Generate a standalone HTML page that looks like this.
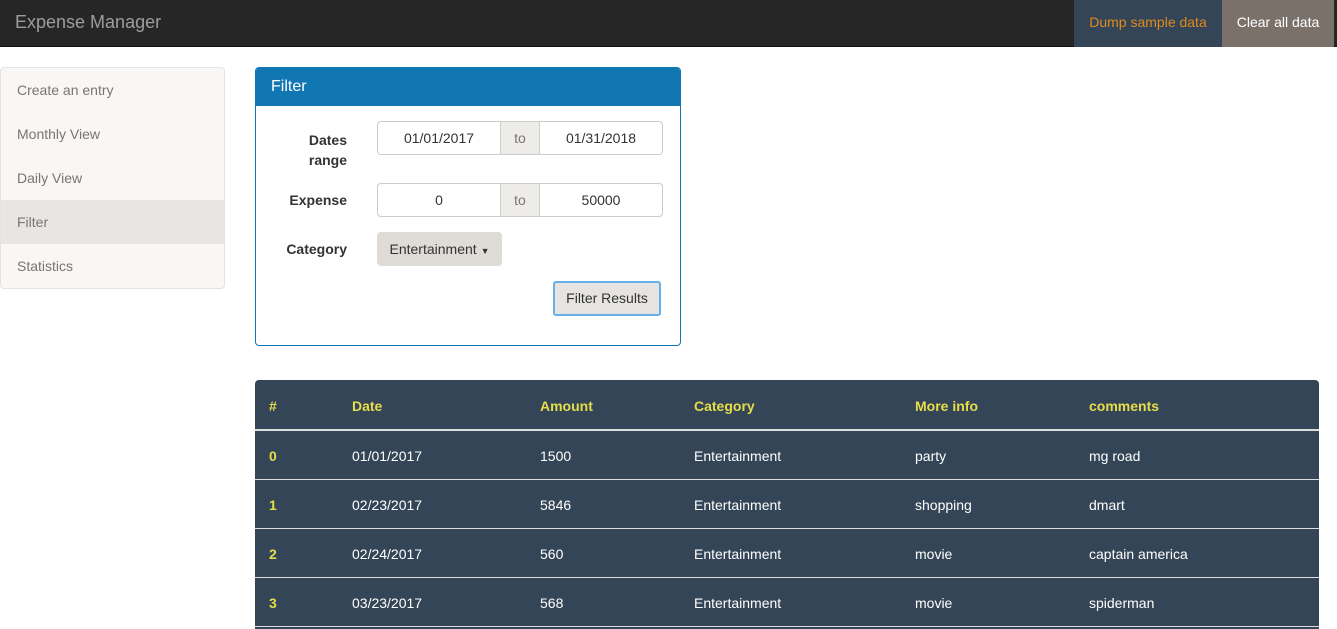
<!DOCTYPE html>
<html><head><meta charset="utf-8"><style>
*{box-sizing:border-box;margin:0;padding:0}
body{width:1337px;height:629px;overflow:hidden;background:#fff;font-family:"Liberation Sans",Arial,sans-serif;font-size:14px;color:#333;position:relative}
.a{position:absolute}
.nav{left:0;top:0;width:1337px;height:47px;background:#262626;border-bottom:1px solid #111}
.side{left:0;top:67px;width:225px;height:222px;border:1px solid #e5e3df;border-radius:4px;background:#f8f7f5}
.side div{height:44px;line-height:44px;padding-left:16px;color:#7a7571}
.inp{height:34px;border:1px solid #ccc;text-align:center;line-height:32px;background:#fff}
.lbl{font-weight:bold;text-align:right;width:92px;left:255px}
.t{color:#fff;position:absolute}
.y{color:#e6dd4a;font-weight:bold}
.line{position:absolute;left:255px;width:1064px;height:1px;background:#ddd}
</style></head><body>
<div class="a nav"></div>
<div class="a" style="left:15px;top:12px;font-size:18px;color:#9d9d9d">Expense Manager</div>
<div class="a" style="left:1074px;top:0;width:148px;height:47px;background:#334556;color:#e08a1e;line-height:44px;text-align:center">Dump sample data</div>
<div class="a" style="left:1222px;top:0;width:112px;height:47px;background:#7a716b;color:#fff;line-height:44px;text-align:center">Clear all data</div>
<div class="a side"><div>Create an entry</div><div>Monthly View</div><div>Daily View</div><div style="background:#e8e6e3">Filter</div><div>Statistics</div></div>
<div class="a" style="left:255px;top:67px;width:426px;height:279px;border:1px solid #1177b2;border-radius:4px;overflow:hidden">
<div style="background:#1177b2;height:38px;color:#fff;font-size:16px;line-height:38px;padding-left:15px">Filter</div></div>
<div class="a lbl" style="top:130px;line-height:20px">Dates<br>range</div>
<div class="a lbl" style="top:192px">Expense</div>
<div class="a lbl" style="top:241px">Category</div>
<div class="a inp" style="left:377px;top:121px;width:124px;border-radius:4px 0 0 4px">01/01/2017</div>
<div class="a inp" style="left:500px;top:121px;width:40px;background:#eeece9;color:#777">to</div>
<div class="a inp" style="left:539px;top:121px;width:124px;border-radius:0 4px 4px 0">01/31/2018</div>
<div class="a inp" style="left:377px;top:183px;width:124px;border-radius:4px 0 0 4px">0</div>
<div class="a inp" style="left:500px;top:183px;width:40px;background:#eeece9;color:#777">to</div>
<div class="a inp" style="left:539px;top:183px;width:124px;border-radius:0 4px 4px 0">50000</div>
<div class="a" style="left:377px;top:232px;width:125px;height:34px;background:#dfdcd8;border-radius:4px;line-height:34px;text-align:center">Entertainment <span style="font-size:9px">▼</span></div>
<div class="a" style="left:553px;top:281px;width:108px;height:35px;background:#e6e4e1;border:2px solid #66afe9;border-radius:3px;line-height:31px;text-align:center">Filter Results</div>
<div class="a" style="left:255px;top:380px;width:1064px;height:249px;background:#334556;border-radius:4px 4px 0 0"></div>
<div class="line" style="top:429px;height:2px"></div>
<div class="line" style="top:479px"></div><div class="line" style="top:528px"></div><div class="line" style="top:577px"></div><div class="line" style="top:626px"></div>
<div class="t y" style="left:269px;top:398px">#</div><div class="t y" style="left:352px;top:398px">Date</div><div class="t y" style="left:540px;top:398px">Amount</div><div class="t y" style="left:694px;top:398px">Category</div><div class="t y" style="left:915px;top:398px">More info</div><div class="t y" style="left:1089px;top:398px">comments</div>
<div class="t y" style="left:269px;top:448px">0</div><div class="t" style="left:352px;top:448px">01/01/2017</div><div class="t" style="left:540px;top:448px">1500</div><div class="t" style="left:694px;top:448px">Entertainment</div><div class="t" style="left:915px;top:448px">party</div><div class="t" style="left:1089px;top:448px">mg road</div>
<div class="t y" style="left:269px;top:497px">1</div><div class="t" style="left:352px;top:497px">02/23/2017</div><div class="t" style="left:540px;top:497px">5846</div><div class="t" style="left:694px;top:497px">Entertainment</div><div class="t" style="left:915px;top:497px">shopping</div><div class="t" style="left:1089px;top:497px">dmart</div>
<div class="t y" style="left:269px;top:546px">2</div><div class="t" style="left:352px;top:546px">02/24/2017</div><div class="t" style="left:540px;top:546px">560</div><div class="t" style="left:694px;top:546px">Entertainment</div><div class="t" style="left:915px;top:546px">movie</div><div class="t" style="left:1089px;top:546px">captain america</div>
<div class="t y" style="left:269px;top:595px">3</div><div class="t" style="left:352px;top:595px">03/23/2017</div><div class="t" style="left:540px;top:595px">568</div><div class="t" style="left:694px;top:595px">Entertainment</div><div class="t" style="left:915px;top:595px">movie</div><div class="t" style="left:1089px;top:595px">spiderman</div>
</body></html>
